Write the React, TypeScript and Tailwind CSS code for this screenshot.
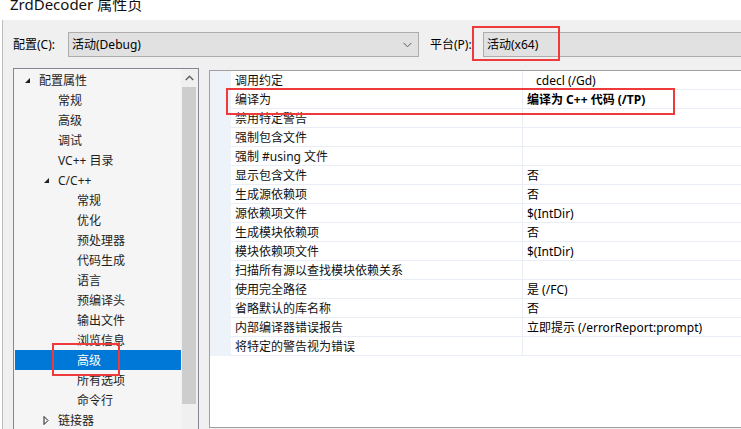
import React from 'react';

type TreeItem = { label: string; level: number; expander?: 'open' | 'closed'; selected?: boolean };

const treeItems: TreeItem[] = [
  { label: '配置属性', level: 0, expander: 'open' },
  { label: '常规', level: 1 },
  { label: '高级', level: 1 },
  { label: '调试', level: 1 },
  { label: 'VC++ 目录', level: 1 },
  { label: 'C/C++', level: 1, expander: 'open' },
  { label: '常规', level: 2 },
  { label: '优化', level: 2 },
  { label: '预处理器', level: 2 },
  { label: '代码生成', level: 2 },
  { label: '语言', level: 2 },
  { label: '预编译头', level: 2 },
  { label: '输出文件', level: 2 },
  { label: '浏览信息', level: 2 },
  { label: '高级', level: 2, selected: true },
  { label: '所有选项', level: 2 },
  { label: '命令行', level: 2 },
  { label: '链接器', level: 1, expander: 'closed' },
];

const props: Array<{ name: string; value?: string; bold?: boolean; indent?: boolean }> = [
  { name: '调用约定', value: 'cdecl (/Gd)', indent: true },
  { name: '编译为', value: '编译为 C++ 代码 (/TP)', bold: true },
  { name: '禁用特定警告' },
  { name: '强制包含文件' },
  { name: '强制 #using 文件' },
  { name: '显示包含文件', value: '否' },
  { name: '生成源依赖项', value: '否' },
  { name: '源依赖项文件', value: '$(IntDir)' },
  { name: '生成模块依赖项', value: '否' },
  { name: '模块依赖项文件', value: '$(IntDir)' },
  { name: '扫描所有源以查找模块依赖关系' },
  { name: '使用完全路径', value: '是 (/FC)' },
  { name: '省略默认的库名称', value: '否' },
  { name: '内部编译器错误报告', value: '立即提示 (/errorReport:prompt)' },
  { name: '将特定的警告视为错误' },
];

// indent of the text column, per tree level
const textPad = ['pl-[24px]', 'pl-[43px]', 'pl-[62px]'];
const arrowPad = ['pl-[9px]', 'pl-[28px]', 'pl-[47px]'];

const Expander = ({ kind }: { kind: 'open' | 'closed' }) =>
  kind === 'open' ? (
    <svg width="7" height="7" viewBox="0 0 7 7" className="shrink-0">
      <path d="M6 1 L6 6 L1 6 Z" fill="#1e1e1e" />
    </svg>
  ) : (
    <svg width="6" height="9" viewBox="0 0 6 9" className="shrink-0">
      <path d="M1 0.5 L5 4.5 L1 8.5 Z" fill="none" stroke="#1e1e1e" strokeWidth="1" />
    </svg>
  );

const TreeRow = ({ item }: { item: TreeItem }) => {
  const pad = item.expander ? arrowPad[item.level] : textPad[item.level];
  return (
    <div
      className={`h-[20px] flex items-center pt-[1px] ${pad} ${
        item.selected ? 'bg-[#0078d7] text-white' : 'text-[#1e1e1e]'
      }`}
    >
      {item.expander && (
        <div className="w-[15px] flex items-center">
          <Expander kind={item.expander} />
        </div>
      )}
      <span className="whitespace-nowrap">{item.label}</span>
    </div>
  );
};

export default function App() {
  return (
    <div
      className="relative w-[741px] h-[429px] overflow-hidden bg-white text-[12px] text-black"
      style={{ fontFamily: '"Noto Sans", "Noto Sans CJK SC", sans-serif' }}
    >
      {/* title bar, cut off at the top */}
      <div className="h-[20px] overflow-hidden pl-[10px]">
        <div className="text-[15px] leading-[15px] -mt-[3px] text-[#111]">ZrdDecoder 属性页</div>
      </div>

      <div className="ml-[2px] h-[409px] border-l border-[#bcbcbc] bg-[#f0f0f0]">
        {/* configuration / platform row */}
        <div className="flex items-center pt-[12px] pl-[10px]">
          <span className="w-[55px] shrink-0 whitespace-nowrap">配置(C):</span>
          <div className="w-[351px] h-[25px] shrink-0 border border-[#adadad] bg-[#e1e1e1] flex items-center justify-between pl-[3px] pr-[6px]">
            <span>活动(Debug)</span>
            <svg width="9" height="6" viewBox="0 0 9 6">
              <path d="M0.5 0.8 L4.5 4.8 L8.5 0.8" fill="none" stroke="#5a5a5a" strokeWidth="1" />
            </svg>
          </div>
          <span className="ml-[11px] w-[53px] shrink-0 whitespace-nowrap">平台(P):</span>
          <div className="w-[300px] h-[25px] shrink-0 border border-[#adadad] bg-[#e1e1e1] flex items-center pl-[3px]">
            <span>活动(x64)</span>
          </div>
        </div>

        {/* tree + property grid */}
        <div className="flex items-start mt-[11px] pl-[10px]">
          <div className="w-[186px] h-[370px] shrink-0 border border-[#828790] bg-[#f5f5f5] flex">
            <div className="w-[167px] pl-[1px] pt-[1px]">
              {treeItems.map((it, i) => (
                <TreeRow key={i} item={it} />
              ))}
            </div>
            <div className="w-[17px] bg-[#f0f0f0] flex flex-col">
              <div className="h-[18px] flex items-center justify-center pr-[1px]">
                <svg width="9" height="6" viewBox="0 0 9 6">
                  <path d="M0.8 5 L4.5 1.3 L8.2 5" fill="none" stroke="#606060" strokeWidth="1.4" />
                </svg>
              </div>
              <div className="ml-[1px] w-[14px] h-[317px] bg-[#cdcdcd]" />
            </div>
          </div>

          <div className="ml-[10px] mt-[2px] w-[540px] h-[358px] shrink-0 border border-[#a0a0a0] bg-white">
            {props.map((p, i) => (
              <div key={i} className="flex h-[19px]">
                <div className="w-[21px] bg-[#eef3fa]" />
                <div className="w-[291px] border-b border-[#e9eef6] flex items-center pt-[2px] pl-[4px] whitespace-nowrap text-[#111]">
                  {p.name}
                </div>
                <div
                  className={`flex-1 border-b border-l border-[#e9eef6] flex items-center pt-[2px] whitespace-nowrap ${
                    p.indent ? 'pl-[13px]' : 'pl-[4px]'
                  } ${p.bold ? 'font-bold' : ''}`}
                >
                  {p.value ?? ''}
                </div>
              </div>
            ))}
          </div>
        </div>
      </div>

      {/* red annotation boxes */}
      <div className="absolute left-[472px] top-[26px] w-[88px] h-[35px] border-2 border-[#ee3a3a]" />
      <div className="absolute left-[226px] top-[88px] w-[449px] h-[27px] border-2 border-[#ee3a3a]" />
      <div className="absolute left-[52px] top-[343px] w-[68px] h-[33px] border-2 border-[#ee3a3a]" />
    </div>
  );
}
